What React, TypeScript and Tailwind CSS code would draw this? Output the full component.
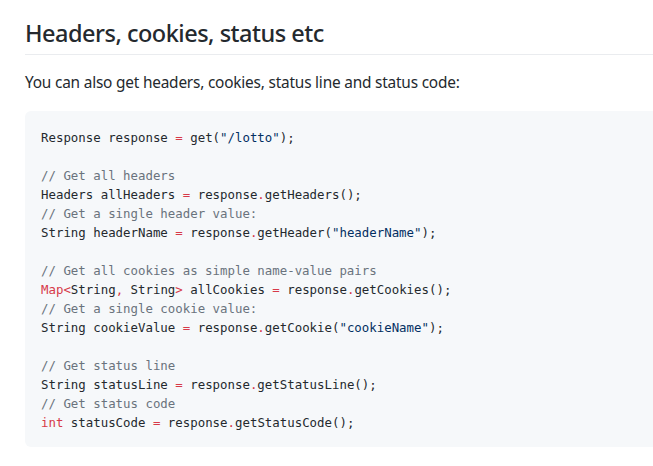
import React from 'react';

type Tok = [string, string?];

const K = 'text-[#d73a49]';
const C = 'text-[#6a737d]';
const S = 'text-[#032f62]';

// each line is a list of tokens: [text, colour class]
const lines: Tok[][] = [
  [['Response response '], ['=', K], [' get('], ['"/lotto"', S], [');']],
  [],
  [['// Get all headers', C]],
  [['Headers allHeaders '], ['=', K], [' response'], ['.', K], ['getHeaders();']],
  [['// Get a single header value:', C]],
  [['String headerName '], ['=', K], [' response'], ['.', K], ['getHeader('], ['"headerName"', S], [');']],
  [],
  [['// Get all cookies as simple name-value pairs', C]],
  [['Map', K], ['<', K], ['String'], [',', K], [' String'], ['>', K], [' allCookies '], ['=', K], [' response'], ['.', K], ['getCookies();']],
  [['// Get a single cookie value:', C]],
  [['String cookieValue '], ['=', K], [' response'], ['.', K], ['getCookie('], ['"cookieName"', S], [');']],
  [],
  [['// Get status line', C]],
  [['String statusLine '], ['=', K], [' response'], ['.', K], ['getStatusLine();']],
  [['// Get status code', C]],
  [['int', K], [' statusCode '], ['=', K], [' response'], ['.', K], ['getStatusCode();']],
];

export default function App() {
  return (
    <div className="w-[653px] h-[466px] overflow-hidden bg-white">
      <div className="w-[680px] pl-[25px] pt-[18px] text-[#24292e] font-['Noto_Sans','Open_Sans',sans-serif]">
        <h2 className="text-[23.5px] leading-[30px] font-medium tracking-[-0.5px] pb-[6px] border-b border-[#eaecef]">
          Headers, cookies, status etc
        </h2>
        <p className="mt-4 text-[15.4px] leading-[24px] tracking-[-0.2px]">
          You can also get headers, cookies, status line and status code:
        </p>
        <pre className="mt-4 bg-[#f6f8fa] rounded-md pt-[17px] pb-[15px] px-4 font-['DejaVu_Sans_Mono',monospace] text-[12.4px] leading-[19px] text-[#24292e]">
          {lines.map((line, i) => (
            <div key={i} className="h-[19px]">
              {line.map(([t, cls], j) => (
                <span key={j} className={cls}>
                  {t}
                </span>
              ))}
            </div>
          ))}
        </pre>
      </div>
    </div>
  );
}
